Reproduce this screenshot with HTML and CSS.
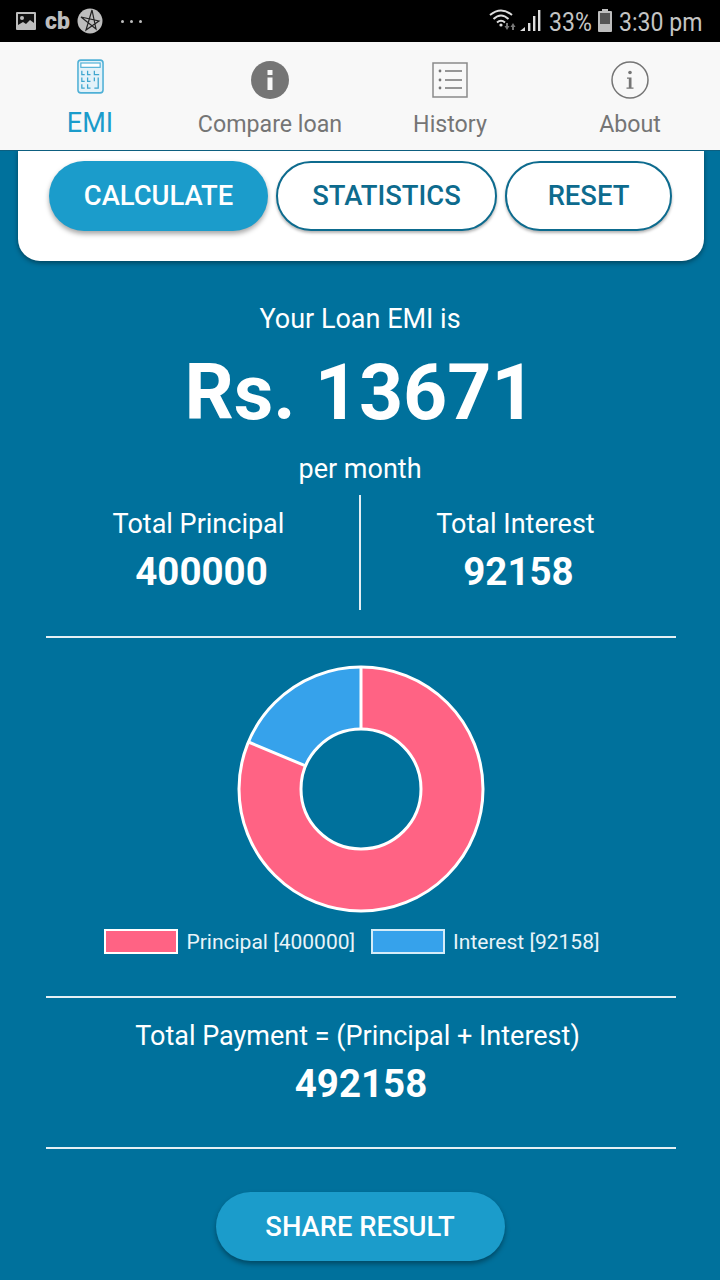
FILE: index.html
```html
<!DOCTYPE html>
<html lang="en">
<head>
  <meta charset="UTF-8" />
  <title>EMI Calculator</title>
  <link rel="stylesheet" href="styles.css">
</head>
<body>

  <div class="status-bar">
    <div class="status-left">
      <svg width="22" height="22" viewBox="0 0 22 22">
        <rect x="1" y="2" width="20" height="18" rx="1" fill="#bdbdbd"/>
        <rect x="3" y="4" width="16" height="14" fill="#111"/>
        <circle cx="7" cy="8" r="2" fill="#bdbdbd"/>
        <path d="M3 18 L3 15 L8 12 L11 14 L15 10 L19 13 L19 18 Z" fill="#bdbdbd"/>
      </svg>
      <span class="status-cb">cb</span>
      <svg width="26" height="26" viewBox="0 0 26 26">
        <circle cx="13" cy="13" r="12.5" fill="#bdbdbd"/>
        <path d="M15 2 L9 22 L22 13 L4 9 L19 21 Z" fill="none" stroke="#222" stroke-width="1.2"/>
      </svg>
      <div class="status-dots"><i></i><i></i><i></i></div>
    </div>
    <div class="status-right">
      <svg width="52" height="26" viewBox="0 0 52 26">
        <path d="M1 7 Q12 -2 23 7" fill="none" stroke="#ddd" stroke-width="2"/>
        <path d="M4.5 11 Q12 4 19.5 11" fill="none" stroke="#ddd" stroke-width="2"/>
        <path d="M8 14.5 Q12 11 16 14.5" fill="none" stroke="#ddd" stroke-width="2"/>
        <circle cx="12" cy="17" r="1.6" fill="#ddd"/>
        <path d="M17 15 h2 v3 h1.5 l-2.5 4 l-2.5 -4 h1.5 Z M23 22 h2 v-3 h1.5 l-2.5 -4 l-2.5 4 h1.5 Z" fill="#777"/>
        <path d="M31 23 L36 19 L36 23 Z" fill="#ddd"/>
        <rect x="39" y="15" width="2.4" height="8" fill="#ddd"/>
        <rect x="44" y="8" width="2.4" height="15" fill="#ddd"/>
        <rect x="49" y="2" width="2.4" height="21" fill="#ddd"/>
      </svg>
      <span class="status-text status-pct">33%</span>
      <svg width="14" height="24" viewBox="0 0 14 24">
        <rect x="4" y="0" width="6" height="3" fill="#bdbdbd"/>
        <rect x="0" y="2" width="14" height="21" rx="1" fill="#bdbdbd"/>
        <rect x="2" y="4" width="10" height="11" fill="#555"/>
      </svg>
      <span class="status-text status-time">3:30 pm</span>
    </div>
  </div>

  <nav class="tabs">
    <div class="tab tab-active">
      <svg width="27" height="35" viewBox="0 0 28 36">
        <rect x="1" y="1" width="26" height="34" rx="3" fill="#e3f2f9" stroke="#4fb0d6" stroke-width="1.6"/>
        <rect x="4" y="4" width="20" height="4.5" fill="#fff" stroke="#4fb0d6" stroke-width="1.2"/>
        <path d="M5 12 v4 h3 M11 12 v4 h3 M18 12 v4 h5 M5 19 v4 h3 M11 19 v4 h3 M18 19 v4 M5 26 v4 h3 M11 26 v4 h3 M22 19 v11 h-4" fill="none" stroke="#3ea6cf" stroke-width="1.3"/>
      </svg>
      <span>EMI</span>
    </div>
    <div class="tab">
      <svg width="38" height="38" viewBox="0 0 38 38">
        <circle cx="19" cy="19" r="19" fill="#757575"/>
        <rect x="16.5" y="9" width="5" height="5" fill="#f8f8f8"/>
        <rect x="16.5" y="16.5" width="5" height="12.5" fill="#f8f8f8"/>
      </svg>
      <span>Compare loan</span>
    </div>
    <div class="tab">
      <svg width="36" height="36" viewBox="0 0 36 36">
        <rect x="1" y="1" width="34" height="34" fill="none" stroke="#8a8a8a" stroke-width="1.5"/>
        <circle cx="8" cy="9" r="1.4" fill="#757575"/>
        <circle cx="8" cy="18" r="1.4" fill="#757575"/>
        <circle cx="8" cy="26" r="1.4" fill="#757575"/>
        <path d="M13 9 H30 M13 18 H30 M13 26 H30" stroke="#757575" stroke-width="1.3"/>
      </svg>
      <span>History</span>
    </div>
    <div class="tab">
      <svg width="38" height="38" viewBox="0 0 38 38">
        <circle cx="19" cy="19" r="18" fill="none" stroke="#757575" stroke-width="1.5"/>
        <circle cx="19" cy="11.5" r="1.8" fill="#757575"/>
        <path d="M16 16.5 H20.5 V26.5 H22.5 V27.8 H15.5 V26.5 H17.8 V17.8 H16 Z" fill="#757575"/>
      </svg>
      <span>About</span>
    </div>
  </nav>

  <main class="screen">
    <div class="card">
      <button class="btn btn-fill btn-calc">CALCULATE</button>
      <button class="btn btn-line btn-stats">STATISTICS</button>
      <button class="btn btn-line btn-reset">RESET</button>
    </div>

    <section class="emi">
      <p class="emi-label">Your Loan EMI is</p>
      <p class="emi-value">Rs. 13671</p>
      <p class="emi-label">per month</p>
    </section>

    <section class="totals">
      <div class="total">
        <p class="emi-label">Total Principal</p>
        <p class="total-value">400000</p>
      </div>
      <div class="total">
        <p class="emi-label">Total Interest</p>
        <p class="total-value">92158</p>
      </div>
    </section>

    <section class="chart">
      <svg width="250" height="250" viewBox="0 0 250 250">
        <circle cx="125" cy="125" r="91" fill="none" stroke="#ff6384" stroke-width="62"/>
        <path d="M125 3 A122 122 0 0 0 12.4 78 L69.6 101.9 A60 60 0 0 1 125 65 Z" fill="#36a2eb"/>
        <path d="M125 3 V65 M12.4 78 L69.6 101.9" stroke="#fff" stroke-width="3"/>
        <circle cx="125" cy="125" r="122" fill="none" stroke="#fff" stroke-width="3"/>
        <circle cx="125" cy="125" r="60" fill="none" stroke="#fff" stroke-width="3"/>
      </svg>
      <div class="legend">
        <i class="swatch swatch-principal"></i>
        <span>Principal [400000]</span>
        <i class="swatch swatch-interest"></i>
        <span>Interest [92158]</span>
      </div>
    </section>

    <section class="payment">
      <p class="emi-label">Total Payment = (Principal + Interest)</p>
      <p class="total-value">492158</p>
    </section>

    <div class="share">
      <button class="btn btn-fill btn-share">SHARE RESULT</button>
    </div>
  </main>

</body>
</html>
```

FILE: styles.css
```css
* {
  box-sizing: border-box;
}
html, body {
  margin: 0;
  padding: 0;
}
body {
  width: 720px;
  height: 1280px;
  overflow: hidden;
  font-family: Roboto, "Noto Sans", sans-serif;
  background-color: #00719c;
  color: #fff;
}
p {
  margin: 0;
}

/* Status bar */
.status-bar {
  height: 42px;
  background-color: #000;
  display: flex;
  justify-content: space-between;
  align-items: center;
  padding: 0 18px 0 15px;
}
.status-left, .status-right {
  display: flex;
  align-items: center;
}
.status-cb {
  font-size: 23px;
  font-weight: 900;
  color: #bdbdbd;
  margin: 0 7px 0 8px;
}
.status-dots {
  display: flex;
  gap: 6px;
  margin-left: 18px;
}
.status-dots i {
  width: 3px;
  height: 3px;
  border-radius: 50%;
  background-color: #bdbdbd;
}
.status-text {
  font-size: 26px;
  color: #c4c4c4;
  white-space: nowrap;
  transform: scaleX(0.887);
  transform-origin: left center;
  margin-top: 2px;
}
.status-pct {
  width: 42px;
  margin: 2px 7px 0 8px;
}
.status-time {
  width: 83px;
  margin-left: 7px;
}

/* Tabs */
.tabs {
  height: 109px;
  background-color: #f8f8f8;
  display: grid;
  grid-template-columns: repeat(4, 180px);
  border-bottom: 1px solid #0d5f80;
  position: relative;
  z-index: 2;
}
.tab {
  display: flex;
  flex-direction: column;
  align-items: center;
  padding-top: 19px;
  color: #757575;
  font-size: 23.2px;
}
.tab svg {
  height: 38px;
  display: block;
}
.tab span {
  margin-top: 11px;
  line-height: 28px;
}
.tab-active {
  color: #1b9ccb;
  font-size: 27px;
}
.tab-active svg {
  height: 35px;
  margin: -2px 0 4px;
}

/* Top card */
.card {
  margin: -1px 16px 0 18px;
  height: 111px;
  background-color: #fff;
  border-radius: 0 0 22px 22px;
  box-shadow: 0 2px 5px rgba(0, 0, 0, 0.4);
  display: flex;
  padding: 11px 0 0 31px;
  gap: 8px;
}
.btn {
  height: 70px;
  border-radius: 35px;
  font-family: Roboto, sans-serif;
  font-size: 27.4px;
  font-weight: 500;
  padding: 0;
}
.btn-fill {
  background-color: #1b9ccb;
  color: #fff;
  border: none;
  box-shadow: 0 3px 5px rgba(0, 0, 0, 0.35);
}
.btn-line {
  background-color: #fff;
  color: #0d6b8e;
  border: 2px solid #0d6b8e;
  box-shadow: 0 2px 3px rgba(0, 0, 0, 0.3);
}
.btn-calc {
  width: 219px;
}
.btn-stats {
  width: 221px;
}
.btn-reset {
  width: 167px;
}

/* EMI summary */
.emi {
  text-align: center;
  margin-top: 40px;
}
.emi-label {
  font-size: 27px;
  line-height: 36px;
}
.emi-value {
  font-size: 77px;
  font-weight: 700;
  line-height: 96px;
  margin: 8px 0 10px;
}

/* Principal and interest columns */
.totals {
  margin: 8px 44px 0 46px;
  height: 143px;
  display: grid;
  grid-template-columns: 315px 315px;
  border-bottom: 2px solid #e4eff4;
}
.total {
  height: 115px;
  padding-top: 11px;
  text-align: center;
}
.total:first-child {
  border-right: 2px solid #e4eff4;
  padding-right: 2px;
}
.total .emi-label {
  padding-right: 6px;
}
.total-value {
  font-size: 38.5px;
  font-weight: 700;
  line-height: 46px;
  margin-top: 7px;
}

/* Donut chart */
.chart {
  margin: 26px 44px 0 46px;
  height: 334px;
  border-bottom: 2px solid #e4eff4;
  display: flex;
  flex-direction: column;
  align-items: center;
}
.chart svg {
  display: block;
}
.legend {
  display: flex;
  align-items: center;
  margin: 15px 18px 0 0;
  font-size: 21px;
  color: #e8f4f9;
}
.swatch {
  width: 74px;
  height: 25px;
  border: 2px solid #fff;
  margin-right: 8px;
}
.swatch-principal {
  background-color: #ff6384;
}
.swatch-interest {
  background-color: #36a2eb;
  margin-left: 16px;
  border-color: #d5ecf8;
}

/* Total payment */
.payment {
  margin: 0 44px 0 46px;
  height: 151px;
  padding-top: 20px;
  border-bottom: 2px solid #e4eff4;
  text-align: center;
}
.payment .emi-label {
  padding-right: 7px;
}
.payment .total-value {
  margin-top: 7px;
}

.share {
  display: flex;
  justify-content: center;
  margin-top: 43px;
}
.btn-share {
  width: 289px;
  height: 69px;
}
```
